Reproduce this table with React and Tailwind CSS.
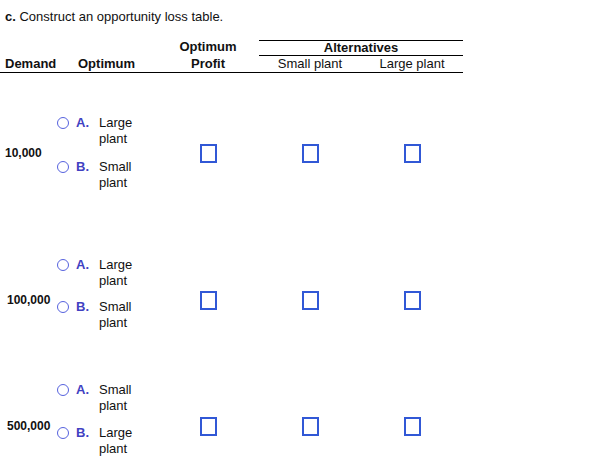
import React from "react";

function Option({ letter, lines }) {
  return (
    <div className="flex items-start">
      <div className="h-[16px] flex items-center ml-[2px]">
        <div className="w-[12px] h-[12px] rounded-full border-[1.5px] border-[#5662de]" />
      </div>
      <div className="ml-[7px] w-[23px] font-bold text-[#4141c2] leading-[16px]">{letter}.</div>
      <div className="leading-[16px] text-[#111]">
        {lines[0]}
        <br />
        {lines[1]}
      </div>
    </div>
  );
}

function Box() {
  return (
    <div className="w-[102px] flex justify-center">
      <div className="w-[17px] h-[19px] border-2 border-[#3158d6] bg-white" />
    </div>
  );
}

function Row({ num, pl, mt, gap, pb, a, b }) {
  return (
    <div className={`flex items-center w-[463px] ${mt}`}>
      <div className={`w-[55px] ${pl} font-bold text-[12px] whitespace-nowrap text-[#111]`}>{num}</div>
      <div className={`w-[102px] flex flex-col ${gap} ${pb}`}>
        <Option letter="A" lines={a} />
        <Option letter="B" lines={b} />
      </div>
      <Box />
      <Box />
      <Box />
    </div>
  );
}

export default function App() {
  return (
    <div
      className="w-[605px] h-[460px] overflow-hidden bg-white text-[13px] text-[#111]"
      style={{ fontFamily: '"Liberation Sans", Arial, sans-serif' }}
    >
      <div className="pt-[9px] pl-[5px] leading-[15px]">
        <b>c.</b> Construct an opportunity loss table.
      </div>
      <div className="mt-[14px] flex items-end w-[463px] border-b border-black">
        <div className="w-[55px] pl-[5px] leading-[17px] font-bold whitespace-nowrap">Demand</div>
        <div className="w-[102px] pl-[23px] leading-[17px] font-bold">Optimum</div>
        <div className="w-[102px] text-center leading-[17px] font-bold">
          Optimum
          <br />
          Profit
        </div>
        <div className="w-[204px] border-t border-black">
          <div className="text-center font-bold leading-[14px] border-b border-black">Alternatives</div>
          <div className="flex">
            <div className="w-1/2 text-center leading-[16px]">Small plant</div>
            <div className="w-1/2 text-center leading-[16px]">Large plant</div>
          </div>
        </div>
      </div>
      <Row num="10,000" pl="pl-[5px]" mt="mt-[42px]" gap="gap-[12px]" pb="pb-0" a={["Large", "plant"]} b={["Small", "plant"]} />
      <Row num="100,000" pl="pl-[7px]" mt="mt-[66px]" gap="gap-[10px]" pb="pb-[12px]" a={["Large", "plant"]} b={["Small", "plant"]} />
      <Row num="500,000" pl="pl-[7px]" mt="mt-[39px]" gap="gap-[11px]" pb="pb-[13px]" a={["Small", "plant"]} b={["Large", "plant"]} />
    </div>
  );
}
